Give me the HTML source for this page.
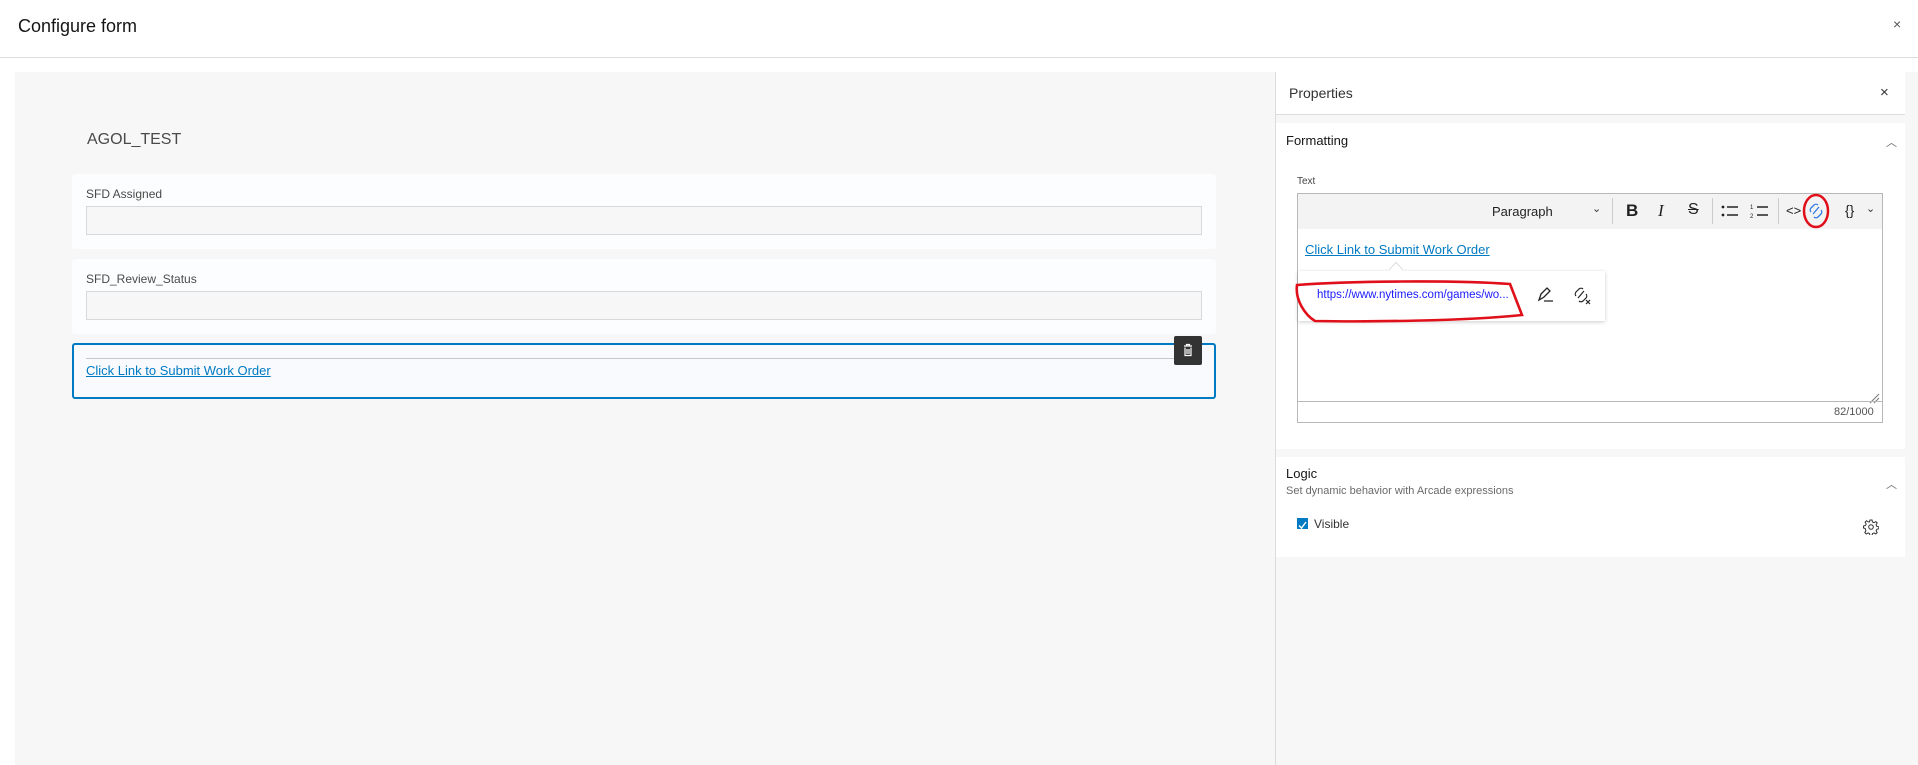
<!DOCTYPE html>
<html><head><meta charset="utf-8"><style>
*{box-sizing:border-box;margin:0;padding:0}
body{width:1918px;height:765px;overflow:hidden;background:#fff;font-family:"Liberation Sans",sans-serif;color:#323232;position:relative}
.a{position:absolute}
.lnk{color:#007ac2;text-decoration:underline}
</style></head><body>
<div class="a" style="left:18px;top:16px;font-size:18px;color:#151515">Configure form</div>
<div class="a" style="left:1893px;top:16px;font-size:14px;color:#555">×</div>
<div class="a" style="left:0;top:57px;width:1918px;height:1px;background:#dcdcdc"></div>

<div class="a" style="left:15px;top:72px;width:1260px;height:693px;background:#f7f7f7"></div>
<div class="a" style="left:87px;top:131px;font-size:16px;color:#4a4a4a">AGOL_TEST</div>

<div class="a" style="left:72px;top:174px;width:1144px;height:75px;background:#fcfdfe;border-radius:3px"></div>
<div class="a" style="left:86px;top:187px;font-size:12px;color:#4a4a4a">SFD Assigned</div>
<div class="a" style="left:86px;top:206px;width:1116px;height:29px;background:#f7f7f7;border:1px solid #d8d8d8"></div>

<div class="a" style="left:72px;top:259px;width:1144px;height:75px;background:#fcfdfe;border-radius:3px"></div>
<div class="a" style="left:86px;top:272px;font-size:12px;color:#4a4a4a">SFD_Review_Status</div>
<div class="a" style="left:86px;top:291px;width:1116px;height:29px;background:#f7f7f7;border:1px solid #d8d8d8"></div>

<div class="a" style="left:72px;top:343px;width:1144px;height:56px;background:#f8fafd;border:2px solid #007ac2;border-radius:3px"></div>
<div class="a" style="left:86px;top:358px;width:1110px;height:1px;background:#c8c8c8"></div>
<div class="a lnk" style="left:86px;top:363px;font-size:13px">Click Link to Submit Work Order</div>
<div class="a" style="left:1174px;top:336px;width:28px;height:29px;background:#333;border-radius:2px">
<svg width="28" height="29" viewBox="0 0 28 29"><path d="M10 10h8M12.5 10v-1.5h3V10M11 11.5v8h6v-8M13 13v5M15 13v5" stroke="#fff" stroke-width="1.2" fill="none"/></svg></div>

<!-- right panel -->
<div class="a" style="left:1275px;top:72px;width:1px;height:693px;background:#dcdcdc"></div>
<div class="a" style="left:1276px;top:72px;width:642px;height:693px;background:#f7f7f7"></div>
<div class="a" style="left:1276px;top:72px;width:629px;height:43px;background:#fff;border-bottom:1px solid #dcdcdc"></div>
<div class="a" style="left:1289px;top:85px;font-size:14px;color:#323232">Properties</div>
<div class="a" style="left:1880px;top:84px;font-size:15px;color:#333">×</div>

<div class="a" style="left:1276px;top:123px;width:629px;height:326px;background:#fff"></div>
<div class="a" style="left:1286px;top:133px;font-size:13px;color:#151515">Formatting</div>
<div class="a" style="left:1886px;top:134px;font-size:11px;color:#666">︿</div>
<div class="a" style="left:1297px;top:176px;font-size:10px;color:#444">Text</div>

<div class="a" style="left:1297px;top:193px;width:586px;height:230px;border:1px solid #b8b8b8;background:#fff"></div>
<div class="a" style="left:1298px;top:194px;width:584px;height:35px;background:#f3f3f3"></div>
<div class="a" style="left:1492px;top:204px;font-size:13px;color:#222">Paragraph</div>
<div class="a" style="left:1592px;top:202px;font-size:11px;color:#333">⌄</div>
<div class="a" style="left:1612px;top:198px;width:1px;height:26px;background:#ccc"></div>
<div class="a" style="left:1626px;top:201px;font-size:17px;font-weight:bold;color:#222">B</div>
<div class="a" style="left:1658px;top:201px;font-size:17px;font-style:italic;font-family:'Liberation Serif',serif;color:#222">I</div>
<div class="a" style="left:1688px;top:201px;font-size:16px;text-decoration:line-through;color:#222">S</div>
<div class="a" style="left:1712px;top:198px;width:1px;height:26px;background:#ccc"></div>
<svg class="a" style="left:1720px;top:203px" width="20" height="16"><circle cx="3" cy="4" r="1.4" fill="#222"/><circle cx="3" cy="12" r="1.4" fill="#222"/><path d="M7 4h11M7 12h11" stroke="#222" stroke-width="1.4"/></svg>
<svg class="a" style="left:1750px;top:203px" width="20" height="16"><text x="0" y="6" font-size="6" fill="#222" font-family="Liberation Sans">1</text><text x="0" y="15" font-size="6" fill="#222" font-family="Liberation Sans">2</text><path d="M7 4h11M7 12h11" stroke="#222" stroke-width="1.4"/></svg>
<div class="a" style="left:1778px;top:198px;width:1px;height:26px;background:#ccc"></div>
<div class="a" style="left:1786px;top:203px;font-size:13px;color:#222">&lt;&gt;</div>
<svg class="a" style="left:1802px;top:193px" width="40" height="36"><ellipse cx="14" cy="18" rx="12" ry="16" fill="none" stroke="#e0101a" stroke-width="2.5"/><path d="M11 21l6-7M9 19a3 3 0 0 1 0-4l3-3a3 3 0 0 1 4 0M19 17a3 3 0 0 1 0 4l-3 3a3 3 0 0 1-4 0" stroke="#2d7be5" stroke-width="1.3" fill="none"/></svg>
<div class="a" style="left:1845px;top:202px;font-size:14px;color:#222">{}</div>
<div class="a" style="left:1866px;top:202px;font-size:11px;color:#333">⌄</div>

<div class="a lnk" style="left:1305px;top:242px;font-size:13px">Click Link to Submit Work Order</div>
<div class="a" style="left:1298px;top:271px;width:307px;height:50px;background:#fff;box-shadow:0 1px 4px rgba(0,0,0,.2)"></div>
<div class="a" style="left:1391px;top:264px;width:10px;height:10px;background:#fff;border-left:1px solid #ddd;border-top:1px solid #ddd;transform:rotate(45deg)"></div>
<div class="a" style="left:1317px;top:289px;font-size:11.5px;color:#1a1aff">https://www.nytimes.com/games/wo...</div>
<svg class="a" style="left:1285px;top:275px" width="250" height="55"><path d="M12 10C60 6 170 5 225 9L237 40C180 46 80 47 30 46C20 40 10 25 12 10Z" fill="none" stroke="#e0101a" stroke-width="2.6"/></svg>
<svg class="a" style="left:1536px;top:286px" width="20" height="18"><path d="M3 14l2-6 6-6 3 3-6 6zM8 15h9" stroke="#222" stroke-width="1.3" fill="none"/></svg>
<svg class="a" style="left:1572px;top:285px" width="20" height="20"><path d="M6 13l6-7M4 11a3 3 0 0 1 0-4l3-3a3 3 0 0 1 4 0M14 9a3 3 0 0 1 0 4l-3 3a3 3 0 0 1-4 0M14 15l4 4M18 15l-4 4" stroke="#222" stroke-width="1.2" fill="none"/></svg>
<svg class="a" style="left:1868px;top:392px" width="12" height="12"><path d="M2 11L11 2M6 11l5-5" stroke="#777"/></svg>
<div class="a" style="left:1298px;top:401px;width:584px;height:1px;background:#b8b8b8"></div>
<div class="a" style="left:1834px;top:406px;font-size:11px;color:#555">82/1000</div>

<div class="a" style="left:1276px;top:457px;width:629px;height:100px;background:#fff"></div>
<div class="a" style="left:1286px;top:466px;font-size:13px;color:#151515">Logic</div>
<div class="a" style="left:1286px;top:485px;font-size:11px;color:#6a6a6a">Set dynamic behavior with Arcade expressions</div>
<div class="a" style="left:1886px;top:476px;font-size:11px;color:#666">︿</div>
<div class="a" style="left:1297px;top:518px;width:11px;height:11px;background:#007ac2"><svg width="11" height="11"><path d="M2 5.5l2.5 2.5 4.5-6" stroke="#fff" stroke-width="1.4" fill="none"/></svg></div>
<div class="a" style="left:1314px;top:517px;font-size:12px;color:#323232">Visible</div>
<svg class="a" style="left:1863px;top:519px" width="16" height="16" viewBox="0 0 16 16"><path d="M7 1h2l.5 2 1.5.7 1.8-1.1 1.4 1.4-1.1 1.8.7 1.5 2 .5v2l-2 .5-.7 1.5 1.1 1.8-1.4 1.4-1.8-1.1-1.5.7-.5 2H7l-.5-2-1.5-.7-1.8 1.1-1.4-1.4 1.1-1.8L2.2 9.5 0.5 9V7l2-.5.7-1.5-1.1-1.8 1.4-1.4 1.8 1.1L6.5 3z" fill="none" stroke="#333" stroke-width="1"/><circle cx="8" cy="8" r="2.3" fill="none" stroke="#333"/></svg>
</body></html>
